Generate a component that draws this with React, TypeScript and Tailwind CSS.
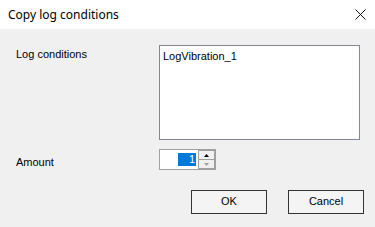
import React from 'react';

const labelFont = { fontFamily: '"Liberation Sans", Arial, sans-serif' };

function CloseIcon() {
	return (
		<svg width="11" height="11" viewBox="0 0 11 11" className="block">
			<path d="M0.5 0.5 L10.5 10.5 M10.5 0.5 L0.5 10.5" stroke="#111" strokeWidth="1" fill="none" />
		</svg>
	);
}

function SpinBox() {
	return (
		<div className="flex h-[21px] w-[57px] border border-[#a0a0a0] bg-white">
			<div className="flex flex-1 items-center justify-end pr-[2px]">
				<span className="flex h-[13px] w-[18px] items-center justify-end bg-[#0078d7] pr-[1px] text-[11px] leading-none text-white">
					1
				</span>
			</div>
			<div className="flex w-[17px] flex-col gap-px bg-[#a0a0a0] p-px">
				<div className="flex flex-1 items-center justify-center bg-[#f0f0f0]">
					<svg width="5" height="3" viewBox="0 0 5 3">
						<path d="M2.5 0 L5 3 L0 3 Z" fill="#000" />
					</svg>
				</div>
				<div className="flex flex-1 items-center justify-center bg-[#f0f0f0]">
					<svg width="5" height="3" viewBox="0 0 5 3">
						<path d="M0 0 L5 0 L2.5 3 Z" fill="#a0a0a0" />
					</svg>
				</div>
			</div>
		</div>
	);
}

export default function App() {
	return (
		<div className="flex h-[227px] w-[375px] flex-col bg-[#f0f0f0]" style={labelFont}>
			{/* Title bar */}
			<div className="flex h-[29px] items-center justify-between bg-white pl-[8px] pr-[8px]">
				<span
					className="text-[12px] text-black"
					style={{ fontFamily: '"Noto Sans", "Open Sans", sans-serif' }}
				>
					Copy log conditions
				</span>
				<div className="mr-[1px]">
					<CloseIcon />
				</div>
			</div>

			{/* Body */}
			<div className="flex flex-col pl-[16px] pt-[16px] text-[11px] text-black">
				<div className="flex">
					<div className="w-[143px] pt-[1px]">Log conditions</div>
					<div className="h-[95px] w-[201px] border border-[#828790] bg-white px-[3px] pt-[2px]">
						LogVibration_1
					</div>
				</div>

				<div className="mt-[9px] flex items-start">
					<div className="w-[143px] pt-[5px]">Amount</div>
					<SpinBox />
				</div>

				<div className="mt-[19px] flex gap-[21px] pl-[175px]">
					<button className="h-[24px] w-[76px] border border-[#333] bg-[#f4f4f4] text-[11px] text-black">
						OK
					</button>
					<button className="h-[24px] w-[76px] border border-[#333] bg-[#f4f4f4] text-[11px] text-black">
						Cancel
					</button>
				</div>
			</div>
		</div>
	);
}
